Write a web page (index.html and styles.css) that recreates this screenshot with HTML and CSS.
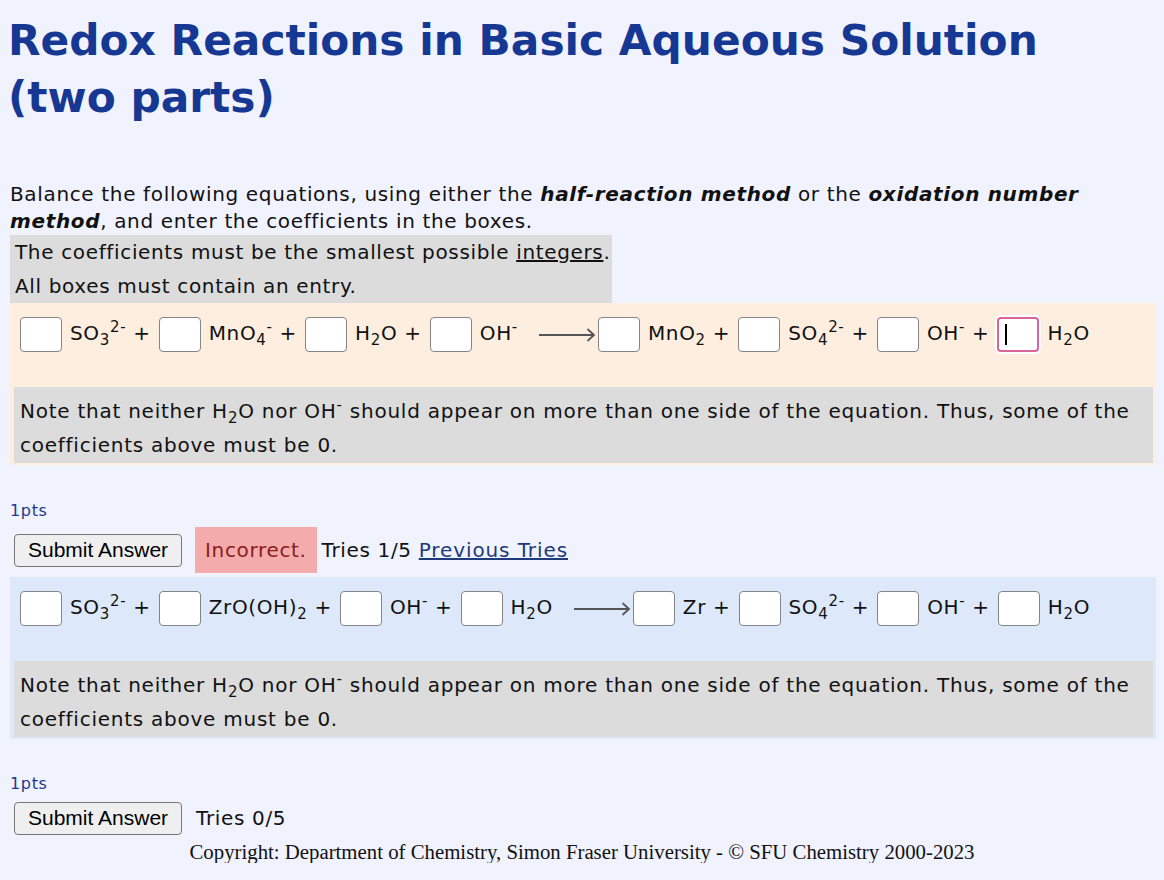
FILE: index.html
```html
<!DOCTYPE html>
<html>
<head>
<meta charset="utf-8">
<title>Redox Reactions in Basic Aqueous Solution</title>
<link rel="stylesheet" href="styles.css">
</head>
<body>
<h1 class="title">Redox Reactions in Basic Aqueous Solution (two parts)</h1>
<p class="intro">Balance the following equations, using either the <b><i>half-reaction method</i></b> or the <b><i>oxidation number method</i></b>, and enter the coefficients in the boxes.</p>
<div class="rules">
  <div>The coefficients must be the smallest possible <u>integers</u>.</div>
  <div>All boxes must contain an entry.</div>
</div>

<div class="part part-a">
  <div class="eq"><input class="co" type="text"> SO<sub>3</sub><sup>2-</sup> + <input class="co" type="text"> MnO<sub>4</sub><sup>-</sup> + <input class="co" type="text"> H<sub>2</sub>O + <input class="co" type="text"> OH<sup>-</sup> <svg class="arrow" width="58" height="16" viewBox="0 0 58 16"><path d="M1 8 H55" stroke="#555" stroke-width="2" fill="none"/><path d="M50 2.5 L56 8 L50 13.5" stroke="#555" stroke-width="1.8" fill="none" stroke-linecap="round"/></svg><input class="co" type="text"> MnO<sub>2</sub> + <input class="co" type="text"> SO<sub>4</sub><sup>2-</sup> + <input class="co" type="text"> OH<sup>-</sup> + <span class="focus-wrap"><input class="co focused" type="text"><span class="caret"></span></span> H<sub>2</sub>O</div>
  <div class="note">Note that neither H<sub>2</sub>O nor OH<sup>-</sup> should appear on more than one side of the equation. Thus, some of the coefficients above must be 0.</div>
</div>

<div class="pts">1pts</div>
<div class="submit-row">
  <button class="submit">Submit Answer</button>
  <span class="incorrect">Incorrect.</span>
  <span class="tries">Tries 1/5 <a href="#" class="prev">Previous Tries</a></span>
</div>

<div class="part part-b">
  <div class="eq"><input class="co" type="text"> SO<sub>3</sub><sup>2-</sup> + <input class="co" type="text"> ZrO(OH)<sub>2</sub> + <input class="co" type="text"> OH<sup>-</sup> + <input class="co" type="text"> H<sub>2</sub>O <svg class="arrow" width="58" height="16" viewBox="0 0 58 16"><path d="M1 8 H55" stroke="#555" stroke-width="2" fill="none"/><path d="M50 2.5 L56 8 L50 13.5" stroke="#555" stroke-width="1.8" fill="none" stroke-linecap="round"/></svg><input class="co" type="text"> Zr + <input class="co" type="text"> SO<sub>4</sub><sup>2-</sup> + <input class="co" type="text"> OH<sup>-</sup> + <input class="co" type="text"> H<sub>2</sub>O</div>
  <div class="note">Note that neither H<sub>2</sub>O nor OH<sup>-</sup> should appear on more than one side of the equation. Thus, some of the coefficients above must be 0.</div>
</div>

<div class="pts pts-b">1pts</div>
<div class="submit-row submit-row-b">
  <button class="submit">Submit Answer</button>
  <span class="tries tries-b">Tries 0/5</span>
</div>
<div class="copyright">Copyright: Department of Chemistry, Simon Fraser University - © SFU Chemistry 2000-2023</div>
</body>
</html>
```
FILE: styles.css
```css
html, body {
  background: #f0f2fe;
}
body {
  margin: 8px;
  font-family: "DejaVu Sans", Verdana, sans-serif;
  font-size: 20px;
  letter-spacing: 0.65px;
  color: #111;
}
.title {
  margin: 4px 0 0 0;
  font-size: 42.3px;
  line-height: 57px;
  letter-spacing: 0;
  font-weight: bold;
  color: #163893;
}
.intro {
  margin: 55px 0 0 2px;
  line-height: 27px;
}
.rules {
  background: #dcdcdc;
  width: 597px;
  margin-left: 2px;
  padding-left: 5px;
  line-height: 34px;
}
.part {
  margin-left: 2px;
  padding: 12px 3px 2px 4px;
}
.part-a { background: #fdeee0; }
.part-b { background: #dde9fb; }
.eq {
  padding-left: 5px;
  height: 36px;
  line-height: 36px;
  margin-bottom: 36px;
  white-space: nowrap;
  word-spacing: 0;
}
.eq sub, .eq sup, .note sub, .note sup {
  font-size: 15px;
  line-height: 0;
}
.co {
  box-sizing: border-box;
  width: 42px;
  height: 35px;
  border: 1px solid #858585;
  border-radius: 4px;
  background: #fff;
  vertical-align: middle;
  margin: 0 1px;
  padding: 0;
}
.focus-wrap {
  position: relative;
  display: inline-block;
  vertical-align: middle;
  line-height: 0;
}
.co.focused {
  border: 2px solid #d9659c;
  box-shadow: 0 0 0 2px #fff;
}
.caret {
  position: absolute;
  left: 9px;
  top: 7px;
  width: 2px;
  height: 21px;
  background: #000;
}
.arrow {
  vertical-align: middle;
  margin: 0 1px 0 13px;
}
.note {
  background: #dcdcdc;
  padding: 7px 6px 1px;
  line-height: 34px;
  letter-spacing: 0.75px;
}
.pts {
  margin: 36px 0 0 2px;
  font-size: 16px;
  line-height: 20px;
  color: #1d3a8f;
}
.pts-b { margin-top: 35px; }
.submit-row {
  display: flex;
  align-items: center;
  height: 46px;
  margin-top: 6px;
  margin-left: 6px;
  margin-bottom: 4px;
}
.submit-row-b {
  margin-top: 1px;
  margin-bottom: 0;
}
.submit {
  font-family: "Liberation Sans", Arial, sans-serif;
  font-size: 21px;
  letter-spacing: 0;
  height: 33px;
  padding: 0 13px;
  background: #efefef;
  border: 1px solid #767676;
  border-radius: 4px;
  color: #000;
}
.incorrect {
  margin-left: 13px;
  background: #f4abab;
  color: #8b1c1c;
  height: 46px;
  line-height: 46px;
  padding: 0 10px;
}
.tries {
  margin-left: 5px;
}
.tries-b {
  margin-left: 14px;
}
.prev {
  color: #1f3a7a;
  letter-spacing: 0.9px;
}
.copyright {
  text-align: center;
  font-family: "Liberation Serif", "Times New Roman", serif;
  font-size: 20.8px;
  letter-spacing: 0;
  line-height: 22px;
  margin-top: 0;
}
```
